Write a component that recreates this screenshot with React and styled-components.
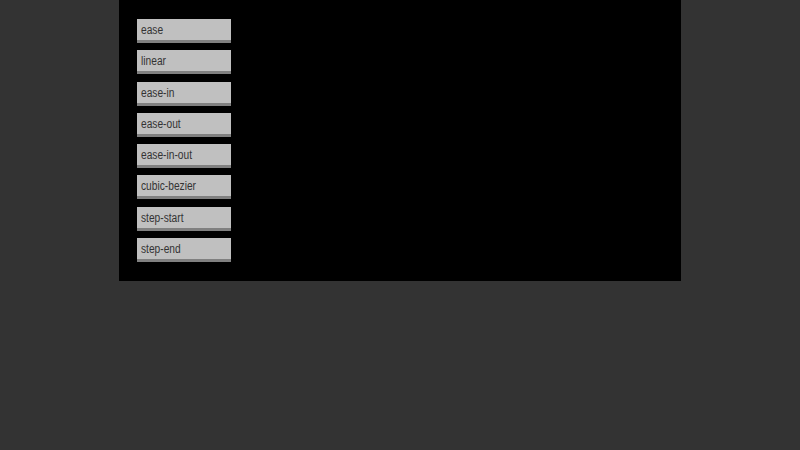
import React from "react";
import styled, { createGlobalStyle } from "styled-components";

const GlobalStyle = createGlobalStyle`
    body {
        margin: 0;
        background: #333333;
        font-family: "Liberation Sans", Arial, sans-serif;
    }
`;

const timings = ["ease", "linear", "ease-in", "ease-out", "ease-in-out", "cubic-bezier", "step-start", "step-end"];

export default function App() {
    return (
        <>
            <GlobalStyle />
            <Stage>
                <ButtonList>
                    {timings.map((t) => (
                        <TimingButton key={t}>
                            <Label>{t}</Label>
                        </TimingButton>
                    ))}
                </ButtonList>
            </Stage>
        </>
    );
}

const Stage = styled.div`
    width: 562px;
    margin: 0 auto;
    background: #000;
    padding: 19px 18px 19px;
    box-sizing: border-box;
`;

const ButtonList = styled.div`
    display: flex;
    flex-direction: column;
    gap: 7.25px;
`;

const TimingButton = styled.div`
    width: 94px;
    height: 24px;
    box-sizing: border-box;
    background: #c0c0c0;
    border-bottom: 3px solid #808080;
    color: #333;
    font-size: 12px;
    line-height: 22px;
    padding-left: 4px;
`;

const Label = styled.span`
    display: inline-block;
    transform: scaleX(0.85);
    transform-origin: left center;
`;
